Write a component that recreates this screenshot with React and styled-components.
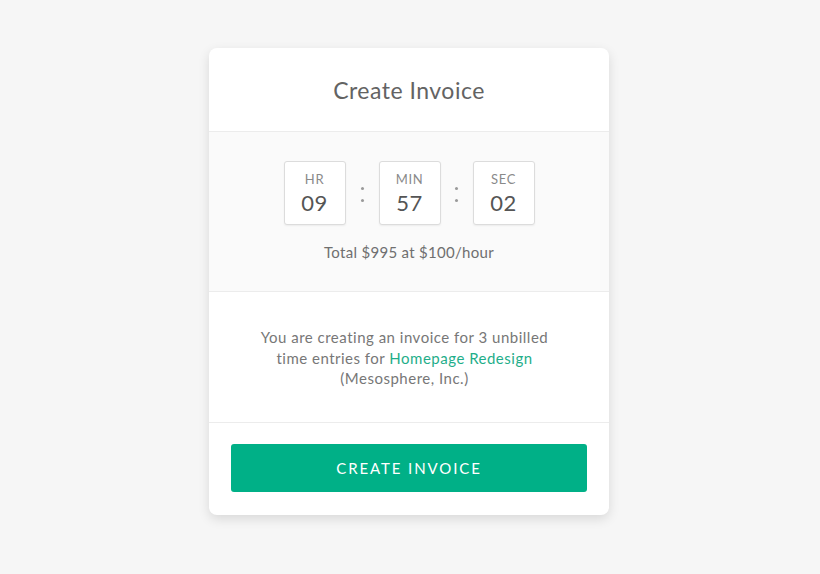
import React from 'react';
import styled, { createGlobalStyle } from 'styled-components';

const Global = createGlobalStyle`
  html, body {
    margin: 0;
    padding: 0;
    background: #f6f6f6;
    font-family: Lato, "Noto Sans", sans-serif;
  }
`

const Page = styled.div`
  width: 820px;
  height: 574px;
  padding-top: 48px;
  box-sizing: border-box;
  display: flex;
  justify-content: center;
  align-items: flex-start;
`

const Card = styled.div`
  width: 400px;
  background: #fff;
  border-radius: 8px;
  box-shadow: 0 4px 12px rgba(0, 0, 0, 0.12);
  overflow: hidden;
  margin-left: -2px;
`

const Header = styled.div`
  height: 84px;
  display: flex;
  align-items: center;
  justify-content: center;
  border-bottom: 1px solid #ececec;
  font-size: 23px;
  color: #636363;
  letter-spacing: 0.5px;
  padding-top: 1px;
  box-sizing: border-box;
`

const Timer = styled.div`
  height: 160px;
  background: #fafafa;
  border-bottom: 1px solid #ececec;
  display: flex;
  flex-direction: column;
  align-items: center;
  padding-top: 29px;
  box-sizing: border-box;
`

const Boxes = styled.div`
  display: flex;
  align-items: center;
`

const Box = styled.div`
  width: 62px;
  height: 64px;
  box-sizing: border-box;
  background: #fff;
  border: 1px solid #dcdcdc;
  border-radius: 3px;
  box-shadow: 0 1px 2px rgba(0, 0, 0, 0.06);
  display: flex;
  flex-direction: column;
  align-items: center;
  padding-top: 9px;
`

const Unit = styled.span`
  font-size: 13px;
  color: #8a8a8a;
  letter-spacing: 0.6px;
  line-height: 16px;
`

const Value = styled.span`
  font-size: 22px;
  color: #555;
  line-height: 28px;
  margin-top: 2px;
  letter-spacing: 0.5px;
`

const Colon = styled.div`
  width: ${p => p.w}px;
  display: flex;
  flex-direction: column;
  align-items: center;
  gap: 9px;
  margin-top: 2px;

  &::before, &::after {
    content: '';
    width: 3px;
    height: 3px;
    border-radius: 50%;
    background: #9a9a9a;
  }
`

const Total = styled.div`
  margin-top: 18px;
  font-size: 15px;
  color: #6f6f6f;
  letter-spacing: 0.3px;
`

const Description = styled.div`
  height: 131px;
  border-bottom: 1px solid #ececec;
  display: flex;
  align-items: center;
  justify-content: center;
  text-align: center;
  padding: 2px 48px 0 39px;
  font-size: 15px;
  line-height: 20.5px;
  letter-spacing: 0.5px;
  color: #777;
  box-sizing: border-box;
`

const Link = styled.a`
  color: #1fae8a;
  text-decoration: none;
`

const Footer = styled.div`
  padding: 21px 22px 23px;
`

const Button = styled.button`
  width: 100%;
  height: 48px;
  border: none;
  border-radius: 3px;
  background: #00b087;
  color: #fff;
  font-family: inherit;
  font-size: 15px;
  letter-spacing: 1.9px;
  cursor: pointer;
`

const App = () => (
  <>
    <Global />
    <Page>
      <Card>
        <Header>Create Invoice</Header>
        <Timer>
          <Boxes>
            <Box><Unit>HR</Unit><Value>09</Value></Box>
            <Colon w={33} />
            <Box><Unit>MIN</Unit><Value>57</Value></Box>
            <Colon w={32} />
            <Box><Unit>SEC</Unit><Value>02</Value></Box>
          </Boxes>
          <Total>Total $995 at $100/hour</Total>
        </Timer>
        <Description>
          <div>
            You are creating an invoice for 3 unbilled<br />
            time entries for <Link href="#">Homepage Redesign</Link><br />
            (Mesosphere, Inc.)
          </div>
        </Description>
        <Footer>
          <Button>CREATE INVOICE</Button>
        </Footer>
      </Card>
    </Page>
  </>
);

export default App;
